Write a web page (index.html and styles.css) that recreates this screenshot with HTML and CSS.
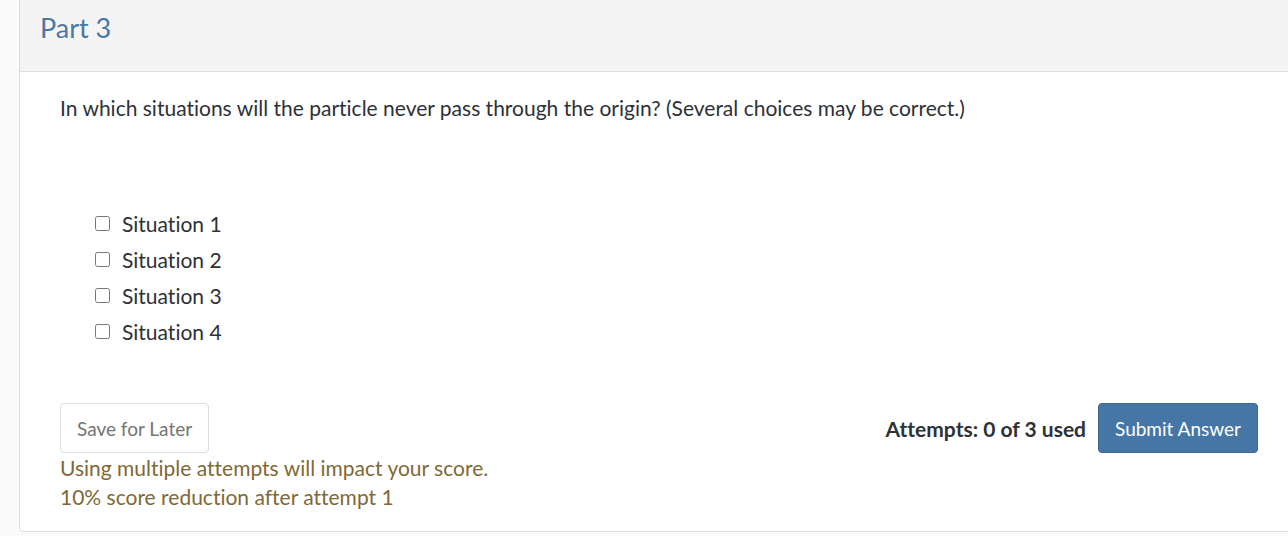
FILE: index.html
```html
<!DOCTYPE html>
<html lang="en">
<head>
  <meta charset="UTF-8">
  <meta name="viewport" content="width=device-width, initial-scale=1.0">
  <title>Part 3</title>
  <link rel="stylesheet" href="styles.css">
</head>
<body>

  <div class="card">
    <div class="card-header">
      <h2>Part 3</h2>
    </div>

    <div class="card-body">
      <p class="question">In which situations will the particle never pass through the origin? (Several choices may be correct.)</p>

      <!-- answer choices -->
      <div class="choices">
        <label class="choice"><input type="checkbox"> Situation 1</label>
        <label class="choice"><input type="checkbox"> Situation 2</label>
        <label class="choice"><input type="checkbox"> Situation 3</label>
        <label class="choice"><input type="checkbox"> Situation 4</label>
      </div>

      <div class="actions">
        <button class="btn btn-default">Save for Later</button>
        <div class="submit-group">
          <span class="attempts">Attempts: 0 of 3 used</span>
          <button class="btn btn-primary">Submit Answer</button>
        </div>
      </div>

      <div class="warning">
        Using multiple attempts will impact your score.<br>
        10% score reduction after attempt 1
      </div>
    </div>
  </div>

</body>
</html>
```

FILE: styles.css
```css
body {
  font-family: Lato, "Noto Sans", sans-serif;
  font-variant-ligatures: none;
  margin: 0;
  padding: 0 0 0 19px;
  background-color: #fafafa;
  color: #2d3138;
  overflow: hidden;
}
.card {
  width: 1280px;
  box-sizing: border-box;
  margin-top: -1px;
  background-color: #fff;
  border: 1px solid #ddd;
  border-radius: 0 0 4px 4px;
}
.card-header {
  background-color: #f4f4f4;
  border-bottom: 1px solid #ddd;
  height: 72px;
  box-sizing: border-box;
  padding: 0 20px 17px 20px;
  display: flex;
  align-items: center;
}
.card-header h2 {
  margin: 0;
  font-size: 27px;
  font-weight: 400;
  color: #4a78a6;
}
.card-body {
  padding: 21px 40px 20px 40px;
}
.question {
  margin: 0;
  font-size: 21px;
  line-height: 30px;
}
.choices {
  margin: 82px 0 0 35px;
}
.choice {
  display: flex;
  align-items: center;
  height: 36px;
  font-size: 21px;
}
.choice input {
  margin: 0 12px 0 0;
  width: 15px;
  height: 15px;
}
.actions {
  margin-top: 54px;
  display: flex;
  justify-content: space-between;
  align-items: center;
}
.submit-group {
  display: flex;
  align-items: center;
  gap: 12px;
}
.attempts {
  font-size: 21px;
  font-weight: 700;
}
.btn {
  font-family: inherit;
  font-variant-ligatures: none;
  font-size: 19px;
  height: 50px;
  padding: 0 16px;
  border-radius: 4px;
  cursor: pointer;
}
.btn-default {
  background-color: #fff;
  border: 1px solid #ddd;
  color: #757575;
}
.btn-primary {
  background-color: #4676a6;
  border: 1px solid #3d6891;
  color: #fff;
}
.warning {
  margin-top: 0;
  font-size: 21px;
  line-height: 29px;
  color: #7f6936;
}
```
